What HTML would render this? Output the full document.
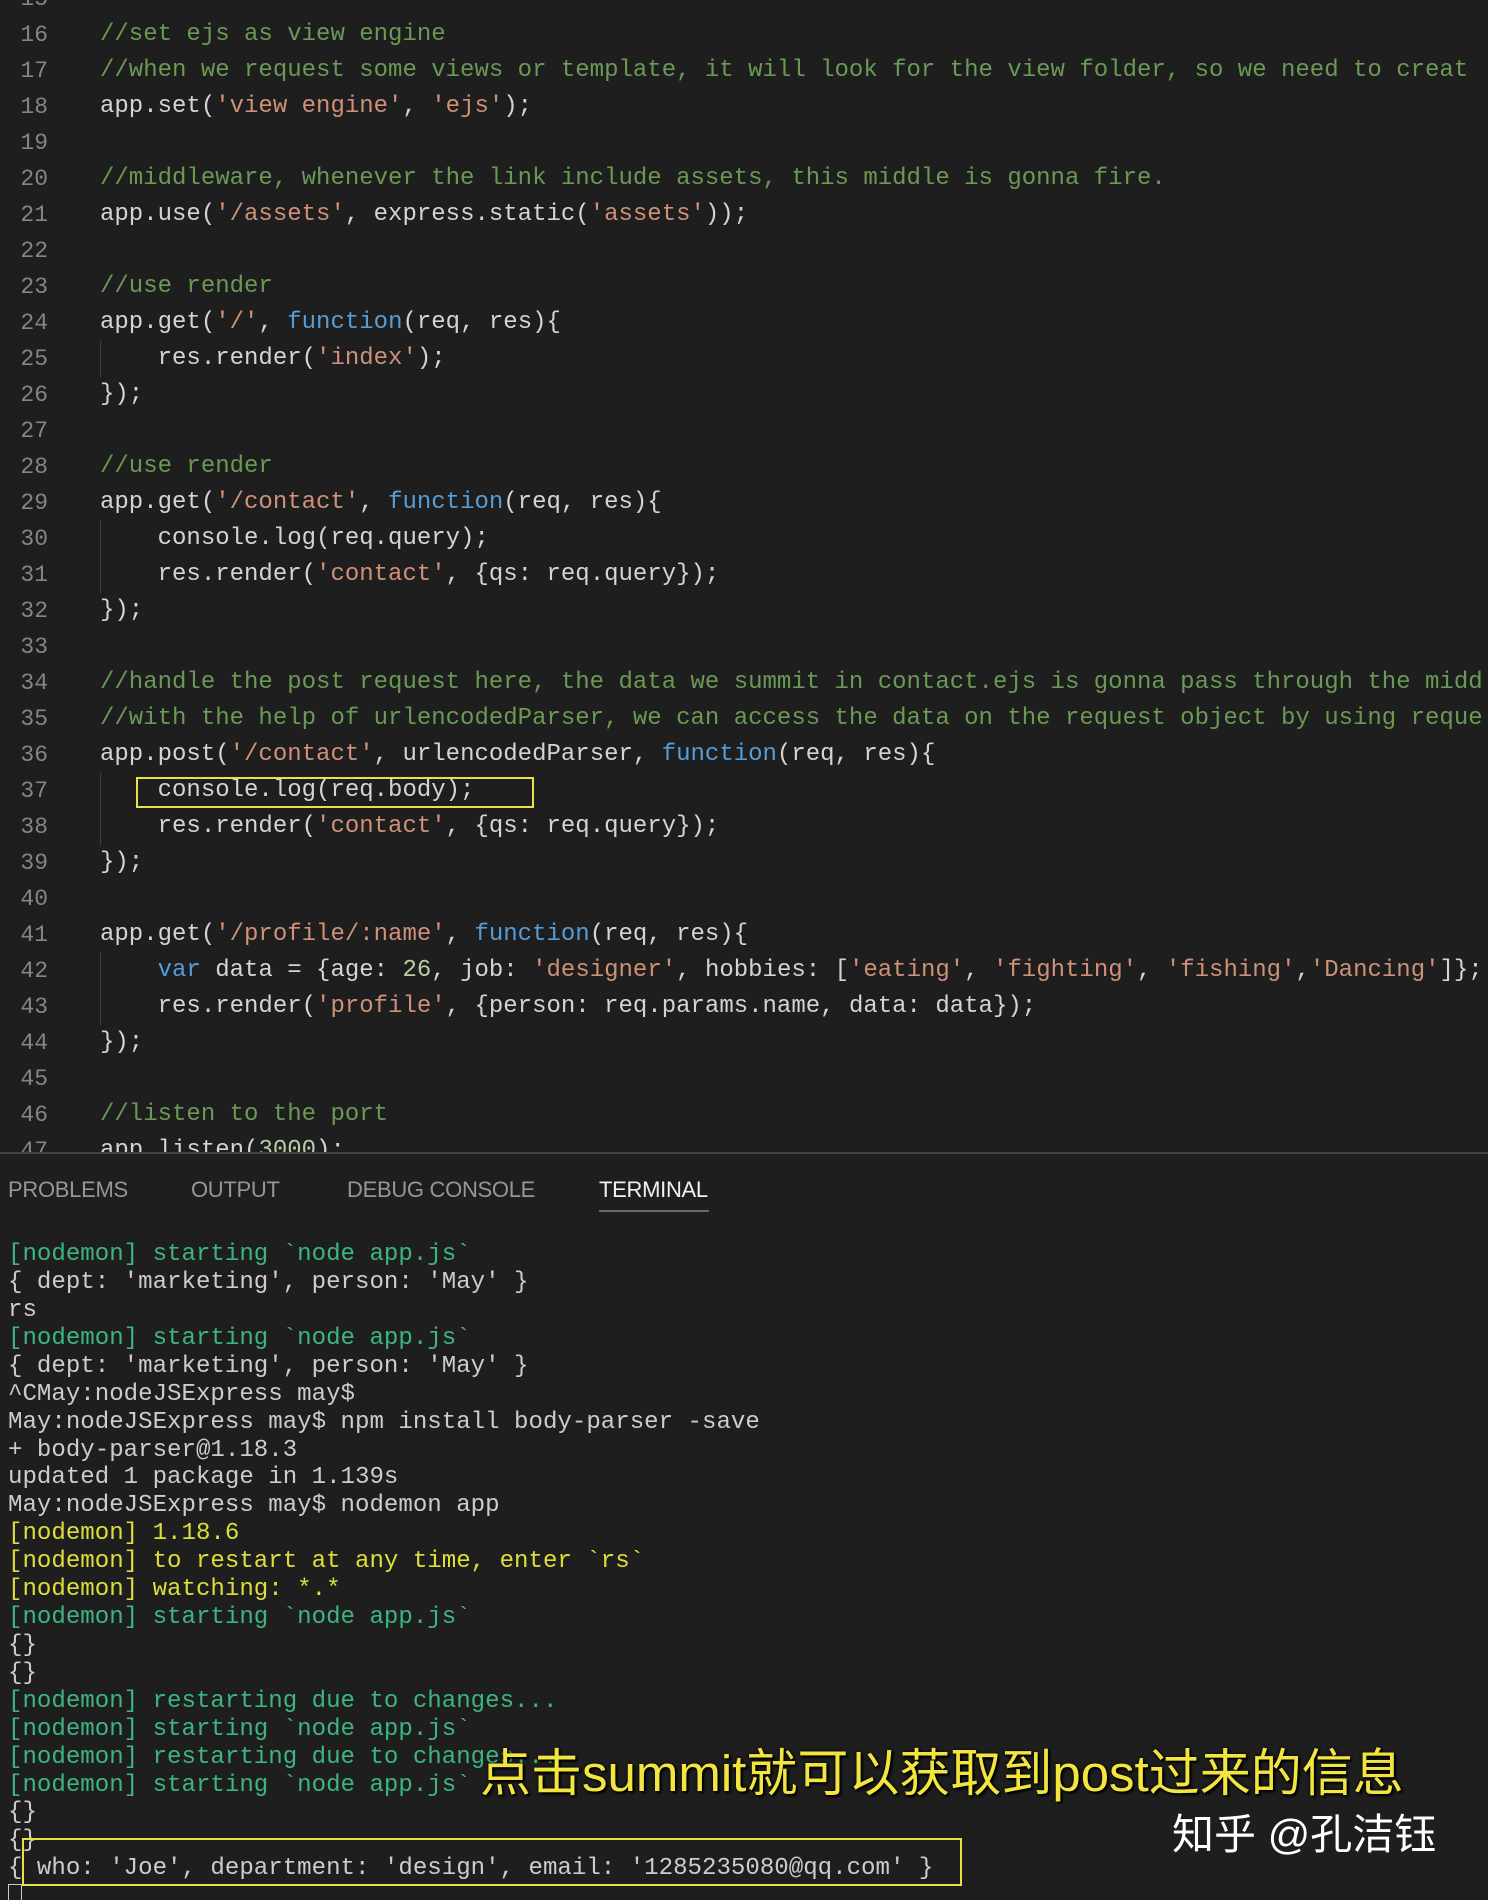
<!DOCTYPE html>
<html><head><meta charset="utf-8"><style>
html,body{margin:0;padding:0;background:#1e1e1e;width:1488px;height:1900px;overflow:hidden;position:relative}
.l{position:absolute;left:100px;height:36px;line-height:36px;font-family:"Liberation Mono",monospace;font-size:24px;color:#d4d4d4;white-space:pre}
.n{position:absolute;left:0;width:48px;text-align:right;height:36px;line-height:36px;font-family:"Liberation Mono",monospace;font-size:23px;color:#858585}
.c{color:#6a9955}.s{color:#ce9178}.k{color:#569cd6}.u{color:#b5cea8}
.g{position:absolute;left:100px;width:1px;background:#404040}
#ed{position:absolute;left:0;top:0;width:1488px;height:1152px;overflow:hidden}
#panel{position:absolute;left:0;top:1152px;width:1488px;height:748px;border-top:2px solid #444;background:#1e1e1e}
.tab{position:absolute;top:23px;font-family:"Liberation Sans",sans-serif;font-size:22px;color:#969696;letter-spacing:-0.3px}
.t{position:absolute;left:8px;height:28px;line-height:28px;font-family:"Liberation Mono",monospace;font-size:24.1px;color:#cccccc;white-space:pre}
.gr{color:#3cb57f}.ye{color:#dede3a}
.box{position:absolute;border:2px solid #e8e341}
</style></head><body>
<div id="ed">
<div class="n" style="top:-19px">15</div>
<div class="n" style="top:17px">16</div><div class="l" style="top:17px"><span class="c">//set ejs as view engine</span></div>
<div class="n" style="top:53px">17</div><div class="l" style="top:53px"><span class="c">//when we request some views or template, it will look for the view folder, so we need to creat</span></div>
<div class="n" style="top:89px">18</div><div class="l" style="top:89px">app.set(<span class="s">'view engine'</span>, <span class="s">'ejs'</span>);</div>
<div class="n" style="top:125px">19</div>
<div class="n" style="top:161px">20</div><div class="l" style="top:161px"><span class="c">//middleware, whenever the link include assets, this middle is gonna fire.</span></div>
<div class="n" style="top:197px">21</div><div class="l" style="top:197px">app.use(<span class="s">'/assets'</span>, express.static(<span class="s">'assets'</span>));</div>
<div class="n" style="top:233px">22</div>
<div class="n" style="top:269px">23</div><div class="l" style="top:269px"><span class="c">//use render</span></div>
<div class="n" style="top:305px">24</div><div class="l" style="top:305px">app.get(<span class="s">'/'</span>, <span class="k">function</span>(req, res){</div>
<div class="n" style="top:341px">25</div><div class="l" style="top:341px">    res.render(<span class="s">'index'</span>);</div>
<div class="g" style="top:341px;height:36px"></div>
<div class="n" style="top:377px">26</div><div class="l" style="top:377px">});</div>
<div class="n" style="top:413px">27</div>
<div class="n" style="top:449px">28</div><div class="l" style="top:449px"><span class="c">//use render</span></div>
<div class="n" style="top:485px">29</div><div class="l" style="top:485px">app.get(<span class="s">'/contact'</span>, <span class="k">function</span>(req, res){</div>
<div class="n" style="top:521px">30</div><div class="l" style="top:521px">    console.log(req.query);</div>
<div class="n" style="top:557px">31</div><div class="l" style="top:557px">    res.render(<span class="s">'contact'</span>, {qs: req.query});</div>
<div class="g" style="top:521px;height:72px"></div>
<div class="n" style="top:593px">32</div><div class="l" style="top:593px">});</div>
<div class="n" style="top:629px">33</div>
<div class="n" style="top:665px">34</div><div class="l" style="top:665px"><span class="c">//handle the post request here, the data we summit in contact.ejs is gonna pass through the midd</span></div>
<div class="n" style="top:701px">35</div><div class="l" style="top:701px"><span class="c">//with the help of urlencodedParser, we can access the data on the request object by using reque</span></div>
<div class="n" style="top:737px">36</div><div class="l" style="top:737px">app.post(<span class="s">'/contact'</span>, urlencodedParser, <span class="k">function</span>(req, res){</div>
<div class="n" style="top:773px">37</div><div class="l" style="top:773px">    console.log(req.body);</div>
<div class="n" style="top:809px">38</div><div class="l" style="top:809px">    res.render(<span class="s">'contact'</span>, {qs: req.query});</div>
<div class="g" style="top:773px;height:72px"></div>
<div class="n" style="top:845px">39</div><div class="l" style="top:845px">});</div>
<div class="n" style="top:881px">40</div>
<div class="n" style="top:917px">41</div><div class="l" style="top:917px">app.get(<span class="s">'/profile/:name'</span>, <span class="k">function</span>(req, res){</div>
<div class="n" style="top:953px">42</div><div class="l" style="top:953px">    <span class="k">var</span> data = {age: <span class="u">26</span>, job: <span class="s">'designer'</span>, hobbies: [<span class="s">'eating'</span>, <span class="s">'fighting'</span>, <span class="s">'fishing'</span>,<span class="s">'Dancing'</span>]};</div>
<div class="n" style="top:989px">43</div><div class="l" style="top:989px">    res.render(<span class="s">'profile'</span>, {person: req.params.name, data: data});</div>
<div class="g" style="top:953px;height:72px"></div>
<div class="n" style="top:1025px">44</div><div class="l" style="top:1025px">});</div>
<div class="n" style="top:1061px">45</div>
<div class="n" style="top:1097px">46</div><div class="l" style="top:1097px"><span class="c">//listen to the port</span></div>
<div class="n" style="top:1133px">47</div><div class="l" style="top:1133px">app.listen(<span class="u">3000</span>);</div>
<div class="box" style="left:136px;top:777px;width:394px;height:27px"></div>
</div>
<div id="panel">
<div class="tab" style="left:8px">PROBLEMS</div>
<div class="tab" style="left:191px">OUTPUT</div>
<div class="tab" style="left:347px">DEBUG CONSOLE</div>
<div class="tab" style="left:599px;color:#f0f0f0">TERMINAL</div>
<div style="position:absolute;left:599px;top:56px;width:110px;height:2px;background:#6a6a6a"></div>
</div>
<div class="t gr" style="top:1241px">[nodemon] starting `node app.js`</div>
<div class="t" style="top:1269px">{ dept: 'marketing', person: 'May' }</div>
<div class="t" style="top:1297px">rs</div>
<div class="t gr" style="top:1325px">[nodemon] starting `node app.js`</div>
<div class="t" style="top:1353px">{ dept: 'marketing', person: 'May' }</div>
<div class="t" style="top:1381px">^CMay:nodeJSExpress may$</div>
<div class="t" style="top:1409px">May:nodeJSExpress may$ npm install body-parser -save</div>
<div class="t" style="top:1437px">+ body-parser@1.18.3</div>
<div class="t" style="top:1464px">updated 1 package in 1.139s</div>
<div class="t" style="top:1492px">May:nodeJSExpress may$ nodemon app</div>
<div class="t ye" style="top:1520px">[nodemon] 1.18.6</div>
<div class="t ye" style="top:1548px">[nodemon] to restart at any time, enter `rs`</div>
<div class="t ye" style="top:1576px">[nodemon] watching: *.*</div>
<div class="t gr" style="top:1604px">[nodemon] starting `node app.js`</div>
<div class="t" style="top:1632px">{}</div>
<div class="t" style="top:1660px">{}</div>
<div class="t gr" style="top:1688px">[nodemon] restarting due to changes...</div>
<div class="t gr" style="top:1716px">[nodemon] starting `node app.js`</div>
<div class="t gr" style="top:1744px">[nodemon] restarting due to changes...</div>
<div class="t gr" style="top:1772px">[nodemon] starting `node app.js`</div>
<div class="t" style="top:1799px">{}</div>
<div class="t" style="top:1827px">{}</div>
<div class="t" style="top:1855px">{ who: 'Joe', department: 'design', email: '1285235080@qq.com' }</div>
<div style="position:absolute;left:8px;top:1884px;width:12px;height:18px;border:1px solid #ccc;border-bottom:none"></div>
<div class="box" style="left:22px;top:1838px;width:936px;height:44px"></div>
<div style="position:absolute;left:480px;top:1744px;font-family:'Liberation Sans','Noto Sans CJK SC',sans-serif;font-size:51px;line-height:60px;color:#f3e53f;text-shadow:0 0 3px #000,2px 2px 2px #000;white-space:nowrap">点击summit就可以获取到post过来的信息</div>
<div style="position:absolute;left:1172px;top:1808px;font-family:'Liberation Sans','Noto Sans CJK SC',sans-serif;font-size:42px;line-height:54px;color:#fff;white-space:nowrap">知乎 @孔洁钰</div>
</body></html>
